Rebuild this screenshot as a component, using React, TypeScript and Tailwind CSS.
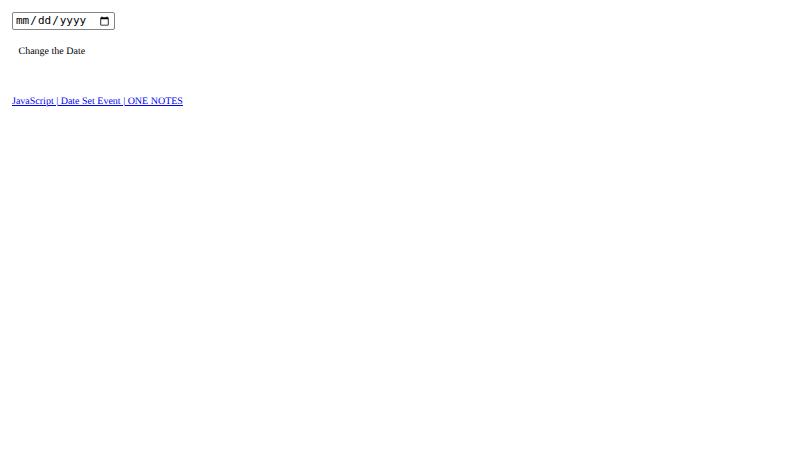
export default function App() {
  return (
    <div className="min-h-[450px] bg-white p-3 font-['Liberation_Serif',serif] text-[10px] leading-[12px] text-black [text-rendering:geometricPrecision]">
      <input
        type="date"
        className="block h-[18px] w-[103px] rounded-[2px] border border-solid border-[#858585] px-[2px] py-[1px] font-['DejaVu_Sans_Mono',monospace] text-[11px]"
      />
      <p className="mt-[16px] pl-[6.5px]">Change the Date</p>
      <div className="mt-[38px]">
        <a href="#" className="text-[#0000ee] underline">
          JavaScript | Date Set Event | ONE NOTES
        </a>
      </div>
    </div>
  )
}
